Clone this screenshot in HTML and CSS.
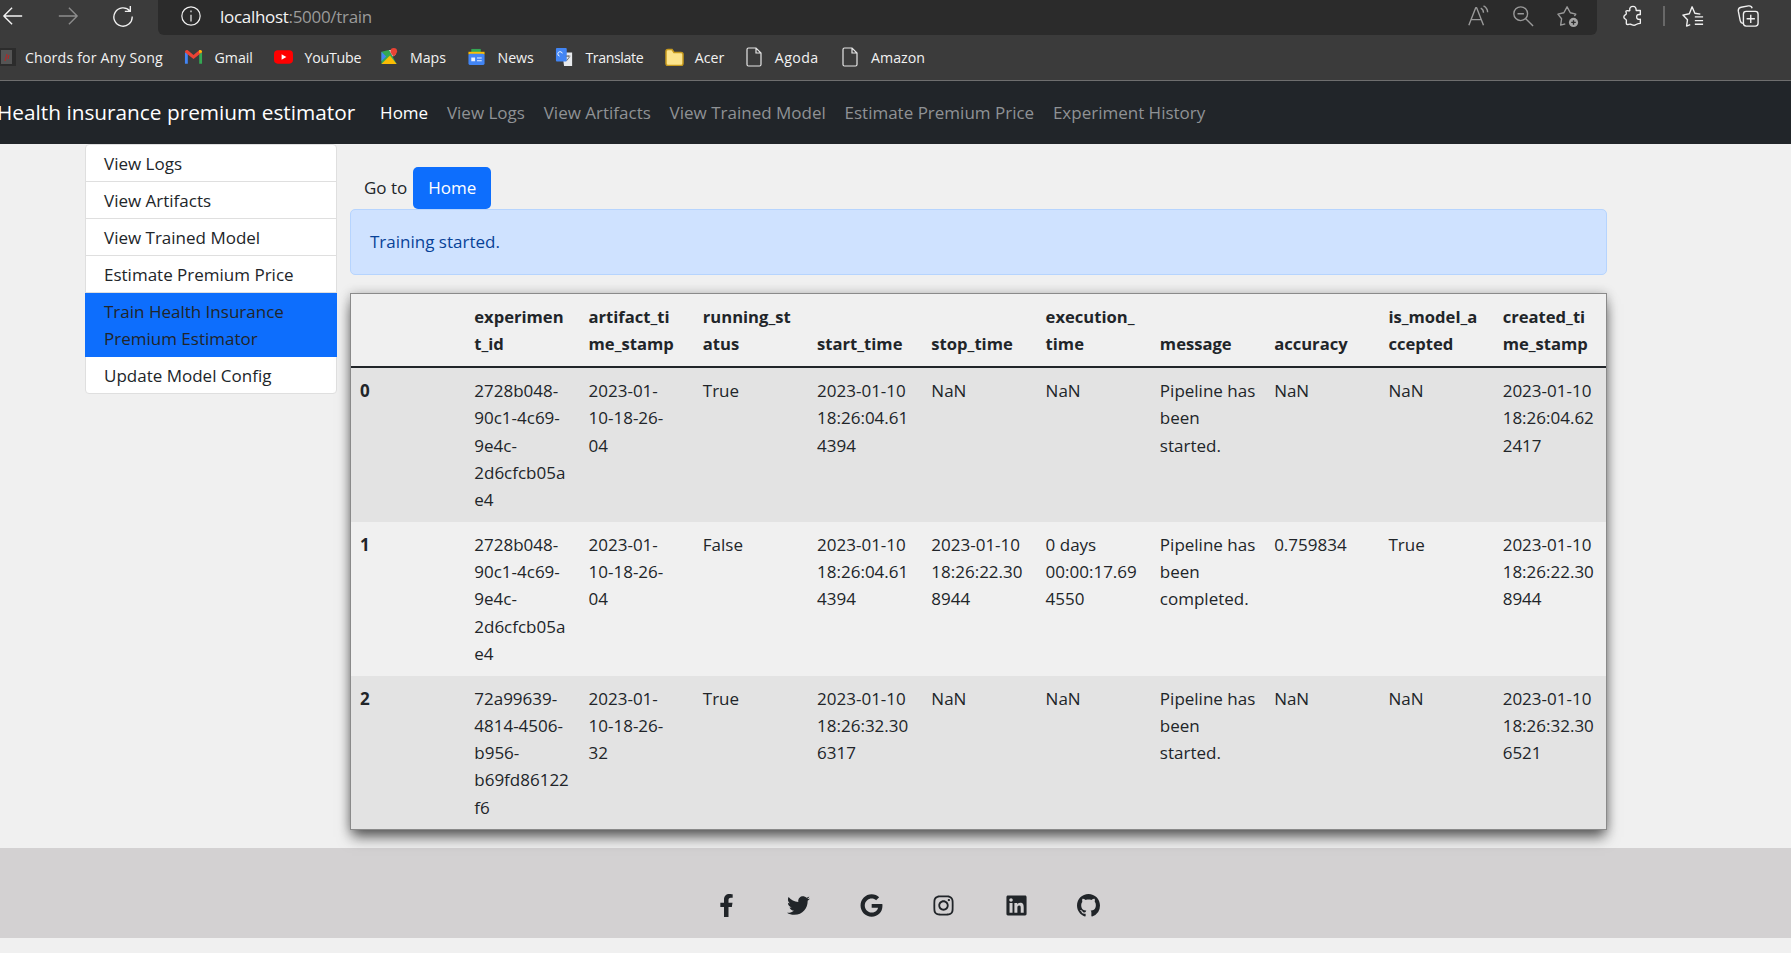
FILE: index.html
```html
<!DOCTYPE html>
<html lang="en">
<head>
<meta charset="utf-8">
<title>Health insurance premium estimator</title>
<link rel="stylesheet" href="styles.css">
</head>
<body>
<header class="browser">
  <div class="toolbar">
    <div class="nav-btns">
      <svg class="tb-icon back" viewBox="0 0 24 24"><path d="M22 12H2M11 3l-9 9 9 9"/></svg>
      <svg class="tb-icon fwd" viewBox="0 0 24 24"><path d="M2 12h20M13 3l9 9-9 9"/></svg>
      <svg class="tb-icon reload" viewBox="0 0 24 24"><path d="M19.5 6.5A10 10 0 1 0 22 12.5M20 1v6h-6"/></svg>
    </div>
    <div class="address">
      <svg class="info" viewBox="0 0 24 24"><circle cx="12" cy="12" r="10"/><path d="M12 10.5V18M12 6v2"/></svg>
      <span class="url"><span class="host">localhost</span>:5000/train</span>
      <div class="addr-tools">
        <svg class="tb-icon dim" viewBox="0 0 24 24"><path d="M2 22 9.5 3h1L18 22M5 16h10.5M15 3.5c2 1 3 3 3 5M18 1c3 1.500 4.500 4 4.500 7"/></svg>
        <svg class="tb-icon dim" viewBox="0 0 24 24"><circle cx="9.500" cy="9.500" r="7.500"/><path d="M15 15l8 8M6 9.500h7"/></svg>
        <svg class="tb-icon dim" viewBox="0 0 24 24"><path d="M9 20.500 4 22l1-7-4-5 6.500-1.500L11 2l3.500 6.500 6 1.500-1.500 2"/><circle cx="18" cy="19" r="5" class="fill-dim"/><path d="M18 16.500v5M15.500 19h5" class="dark-line"/></svg>
      </div>
    </div>
    <div class="app-tools">
      <svg class="tb-icon puzzle" viewBox="0 0 24 24"><path d="M8.500 6C8 3 9.500 1.500 12 1.500S15.500 3 15.500 6L20 6V10.500C17 10 16 11 16 13S17 16 20 15.500V20C17.500 20 16 21 15 21.500 13 23 11 21.500 9.500 21 8 20.500 6 22 5 21 4 19.500 5.500 17.500 4.500 16 3.500 15 2 15 2 13S3.500 11 4.500 10C5.500 8.500 3.500 7.500 4.500 6.500 5.500 5.500 7.500 7 8.500 6Z"/></svg>
      <span class="divider"></span>
      <svg class="tb-icon fav-list" viewBox="0 0 24 24"><path d="M9 21.500 5 23l1-7-5-5 7-1.500L11 2l3 7 6 1M14 13h9M14 17h9M14 21h9"/></svg>
      <svg class="tb-icon collections" viewBox="0 0 24 24"><path d="M7 20C5 20 4 19 3.500 17L1.500 7C1 4 2 3 4.500 2.500l8-1.500c2-.3 3.500.5 4 2.500"/><rect x="7" y="7" width="16" height="16" rx="3"/><path d="M15 10.500v9M10.500 15h9"/></svg>
    </div>
  </div>
  <nav class="bookmarks">
    <a class="bm first"><svg class="fav chord" viewBox="0 0 16 18"><rect width="16" height="18" fill="#2c2c2c"/><rect x="1" y="2" width="11" height="14" fill="#555"/><path d="M7 6l-2 7M9 7 8 11" stroke="#b22" fill="none"/></svg><span>Chords for Any Song</span></a>
    <a class="bm"><svg class="fav" viewBox="0 0 20 16"><path d="M1 15V3l3 1v11z" fill="#4285f4"/><path d="M16 15V4l3-1v12z" fill="#34a853"/><path d="M1 3c0-2 2-3 3-2l6 5 6-5c1-1 3 0 3 2l-9 7z" fill="#ea4335"/><path d="M16 4l3-1c0-2-2-3-3-2z" fill="#fbbc04"/></svg><span>Gmail</span></a>
    <a class="bm yt"><svg class="fav" viewBox="0 0 20 16"><rect y="1" width="20" height="14" rx="4" fill="#f00"/><path d="M8 5l5 3-5 3z" fill="#fff"/></svg><span>YouTube</span></a>
    <a class="bm"><svg class="fav" viewBox="0 0 19 19"><path d="M1 4l8-2 8 15H1z" fill="#34a853"/><path d="M1 17l9-9 7 9z" fill="#fbbc04"/><path d="M1 4l5 5-5 5z" fill="#4285f4"/><path d="M9 2l4 7 3-2-3-5z" fill="#f3f3f3"/><path d="M14 0a3.500 3.500 0 0 1 3.500 3.500C17.500 6 14 9 14 9s-3.500-3-3.500-5.500A3.500 3.500 0 0 1 14 0z" fill="#ea4335"/></svg><span>Maps</span></a>
    <a class="bm"><svg class="fav" viewBox="0 0 19 19"><path d="M4 1h10v6H4z" fill="#34a853"/><path d="M1 4h17v3H1z" fill="#fbbc04"/><rect x="1" y="6" width="17" height="12" rx="2" fill="#4285f4"/><path d="M4 10h4v4H4zM10 10h5v1h-5zM10 13h5v1h-5z" fill="#e8f0fe"/></svg><span>News</span></a>
    <a class="bm"><svg class="fav" viewBox="0 0 19 20"><path d="M7 5h11v15H9z" fill="#e8eaed"/><rect width="12" height="15" rx="1" fill="#4285f4"/><path d="M4 9a2.500 2.500 0 1 1 3-3" fill="none" stroke="#fff"/><path d="M11 9h5M13.500 8v2M12 14l3-4" stroke="#666" fill="none"/></svg><span class="tight">Translate</span></a>
    <a class="bm"><svg class="fav" viewBox="0 0 19 17"><path d="M1 15V3c0-1 .5-2 2-2h4l2 3h7c1.500 0 2 1 2 2v9c0 1-1 2-2 2H3c-1 0-2-1-2-2z" fill="#fce48c" stroke="#c79a1e" stroke-width="1.500"/></svg><span>Acer</span></a>
    <a class="bm bm-page"><svg class="fav page" viewBox="0 0 16 20"><path d="M2.500 1H10l5 5v11.500a1.500 1.500 0 0 1-1.500 1.500h-11A1.500 1.500 0 0 1 1 17.500v-15A1.500 1.500 0 0 1 2.500 1zM10 1v5h5"/></svg><span class="loose">Agoda</span></a>
    <a class="bm bm-page"><svg class="fav page" viewBox="0 0 16 20"><path d="M2.500 1H10l5 5v11.500a1.500 1.500 0 0 1-1.500 1.500h-11A1.500 1.500 0 0 1 1 17.500v-15A1.500 1.500 0 0 1 2.500 1zM10 1v5h5"/></svg><span>Amazon</span></a>
  </nav>
</header>

<nav class="navbar">
  <a class="brand">Health insurance premium estimator</a>
  <a class="nav-link active">Home</a>
  <a class="nav-link">View Logs</a>
  <a class="nav-link">View Artifacts</a>
  <a class="nav-link">View Trained Model</a>
  <a class="nav-link">Estimate Premium Price</a>
  <a class="nav-link">Experiment History</a>
</nav>

<main class="layout">
  <aside class="side-list">
    <a class="side-item">View Logs</a>
    <a class="side-item">View Artifacts</a>
    <a class="side-item">View Trained Model</a>
    <a class="side-item">Estimate Premium Price</a>
    <a class="side-item selected">Train Health Insurance Premium Estimator</a>
    <a class="side-item">Update Model Config</a>
  </aside>
  <section class="content">
    <div class="goto"><span class="goto-label">Go to</span><a class="btn">Home</a></div>
    <div class="alert">Training started.</div>
    <table class="data">
      <thead>
        <tr>
          <th></th>
          <th>experimen<br>t_id</th>
          <th>artifact_ti<br>me_stamp</th>
          <th>running_st<br>atus</th>
          <th>start_time</th>
          <th>stop_time</th>
          <th>execution_<br>time</th>
          <th>message</th>
          <th>accuracy</th>
          <th>is_model_a<br>ccepted</th>
          <th>created_ti<br>me_stamp</th>
        </tr>
      </thead>
      <tbody>
        <tr class="odd">
          <th>0</th>
          <td>2728b048-<br>90c1-4c69-<br>9e4c-<br>2d6cfcb05a<br>e4</td>
          <td>2023-01-<br>10-18-26-<br>04</td>
          <td>True</td>
          <td>2023-01-10<br>18:26:04.61<br>4394</td>
          <td>NaN</td>
          <td>NaN</td>
          <td>Pipeline has<br>been<br>started.</td>
          <td>NaN</td>
          <td>NaN</td>
          <td>2023-01-10<br>18:26:04.62<br>2417</td>
        </tr>
        <tr>
          <th>1</th>
          <td>2728b048-<br>90c1-4c69-<br>9e4c-<br>2d6cfcb05a<br>e4</td>
          <td>2023-01-<br>10-18-26-<br>04</td>
          <td>False</td>
          <td>2023-01-10<br>18:26:04.61<br>4394</td>
          <td>2023-01-10<br>18:26:22.30<br>8944</td>
          <td>0 days<br>00:00:17.69<br>4550</td>
          <td>Pipeline has<br>been<br>completed.</td>
          <td>0.759834</td>
          <td>True</td>
          <td>2023-01-10<br>18:26:22.30<br>8944</td>
        </tr>
        <tr class="odd">
          <th>2</th>
          <td>72a99639-<br>4814-4506-<br>b956-<br>b69fd86122<br>f6</td>
          <td>2023-01-<br>10-18-26-<br>32</td>
          <td>True</td>
          <td>2023-01-10<br>18:26:32.30<br>6317</td>
          <td>NaN</td>
          <td>NaN</td>
          <td>Pipeline has<br>been<br>started.</td>
          <td>NaN</td>
          <td>NaN</td>
          <td>2023-01-10<br>18:26:32.30<br>6521</td>
        </tr>
      </tbody>
    </table>
  </section>
</main>

<footer class="footer">
  <svg class="social fb" viewBox="0 0 320 512"><path d="M279.14 288l14.22-92.66h-88.91v-60.13c0-25.35 12.42-50.06 52.24-50.06h40.42V6.26S260.43 0 225.36 0c-73.22 0-121.08 44.38-121.08 124.72v70.62H22.89V288h81.39v224h100.17V288z"/></svg>
  <svg class="social" viewBox="0 0 512 512"><path d="M459.37 151.716c.325 4.548.325 9.097.325 13.645 0 138.72-105.583 298.558-298.558 298.558-59.452 0-114.68-17.219-161.137-47.106 8.447.974 16.568 1.299 25.34 1.299 49.055 0 94.213-16.568 130.274-44.832-46.132-.975-84.792-31.188-98.112-72.772 6.498.974 12.995 1.624 19.818 1.624 9.421 0 18.843-1.3 27.614-3.573-48.081-9.747-84.143-51.98-84.143-102.985v-1.299c13.969 7.797 30.214 12.67 47.431 13.319-28.264-18.843-46.781-51.005-46.781-87.391 0-19.492 5.197-37.36 14.294-52.954 51.655 63.675 129.3 105.258 216.365 109.807-1.624-7.797-2.599-15.918-2.599-24.04 0-57.828 46.782-104.934 104.934-104.934 30.213 0 57.502 12.67 76.67 33.137 23.715-4.548 46.456-13.32 66.599-25.34-7.798 24.366-24.366 44.833-46.132 57.827 21.117-2.273 41.584-8.122 60.426-16.243-14.292 20.791-32.161 39.308-52.628 54.253z"/></svg>
  <svg class="social" viewBox="0 0 488 512"><path d="M488 261.8C488 403.3 391.1 504 248 504 110.8 504 0 393.2 0 256S110.8 8 248 8c66.8 0 123 24.5 166.3 64.9l-67.5 64.9C258.5 52.6 94.3 116.6 94.3 256c0 86.5 69.1 156.6 153.7 156.6 98.2 0 135-70.4 140.8-106.9H248v-85.3h236.1c2.3 12.7 3.9 24.9 3.9 41.4z"/></svg>
  <svg class="social" viewBox="0 0 448 512"><path d="M224.1 141c-63.6 0-114.9 51.3-114.9 114.9s51.3 114.9 114.9 114.9S339 319.5 339 255.9 287.7 141 224.1 141zm0 189.6c-41.1 0-74.7-33.5-74.7-74.7s33.5-74.7 74.7-74.7 74.7 33.5 74.7 74.7-33.6 74.7-74.7 74.7zm146.4-194.3c0 14.9-12 26.8-26.8 26.8-14.9 0-26.8-12-26.8-26.8s12-26.8 26.8-26.8 26.8 12 26.8 26.8zm76.1 27.2c-1.7-35.9-9.9-67.7-36.2-93.9-26.2-26.2-58-34.4-93.9-36.2-37-2.1-147.9-2.1-184.9 0-35.8 1.7-67.6 9.9-93.9 36.1s-34.4 58-36.2 93.9c-2.1 37-2.1 147.9 0 184.9 1.7 35.9 9.9 67.7 36.2 93.9s58 34.4 93.9 36.2c37 2.1 147.9 2.1 184.9 0 35.9-1.7 67.7-9.9 93.9-36.2 26.2-26.2 34.4-58 36.2-93.9 2.1-37 2.1-147.8 0-184.8zM398.8 388c-7.8 19.6-22.9 34.7-42.6 42.6-29.5 11.7-99.5 9-132.1 9s-102.7 2.6-132.1-9c-19.6-7.8-34.7-22.9-42.6-42.6-11.7-29.5-9-99.5-9-132.1s-2.6-102.7 9-132.1c7.8-19.6 22.9-34.7 42.6-42.6 29.5-11.7 99.5-9 132.1-9s102.7-2.6 132.1 9c19.6 7.8 34.7 22.9 42.6 42.6 11.7 29.5 9 99.5 9 132.1s2.7 102.7-9 132.1z"/></svg>
  <svg class="social" viewBox="0 0 448 512"><path d="M416 32H31.9C14.3 32 0 46.5 0 64.3v383.4C0 465.5 14.3 480 31.9 480H416c17.6 0 32-14.5 32-32.3V64.3c0-17.8-14.4-32.3-32-32.3zM135.4 416H69V202.2h66.5V416zm-33.2-243c-21.3 0-38.5-17.3-38.5-38.5S80.9 96 102.2 96c21.2 0 38.5 17.3 38.5 38.5 0 21.3-17.2 38.5-38.5 38.5zm282.1 243h-66.4V312c0-24.8-.5-56.7-34.5-56.7-34.6 0-39.9 27-39.9 54.9V416h-66.4V202.2h63.7v29.2h.9c8.9-16.8 30.6-34.5 62.9-34.5 67.2 0 79.7 44.3 79.7 101.9V416z"/></svg>
  <svg class="social" viewBox="0 0 16 16"><path d="M8 0C3.58 0 0 3.58 0 8c0 3.54 2.29 6.53 5.47 7.59.4.07.55-.17.55-.38 0-.19-.01-.82-.01-1.49-2.01.37-2.53-.49-2.69-.94-.09-.23-.48-.94-.82-1.13-.28-.15-.68-.52-.01-.53.63-.01 1.08.58 1.23.82.72 1.21 1.87.87 2.33.66.07-.52.28-.87.51-1.07-1.78-.2-3.64-.89-3.64-3.95 0-.87.31-1.59.82-2.15-.08-.2-.36-1.02.08-2.12 0 0 .67-.21 2.2.82.64-.18 1.32-.27 2-.27.68 0 1.36.09 2 .27 1.53-1.04 2.2-.82 2.2-.82.44 1.1.16 1.92.08 2.12.51.56.82 1.27.82 2.15 0 3.07-1.87 3.75-3.65 3.95.29.25.54.73.54 1.48 0 1.07-.01 1.93-.01 2.2 0 .21.15.46.55.38A8.013 8.013 0 0016 8c0-4.42-3.58-8-8-8z"/></svg>
</footer>
</body>
</html>
```
FILE: styles.css
```css
* { box-sizing: border-box; }
html, body { margin: 0; padding: 0; }
body {
  width: 1791px;
  height: 953px;
  overflow: hidden;
  background: #f0f0f0;
  color: #212529;
  font-family: "Open Sans", "Noto Sans", sans-serif;
  font-size: 17px;
  line-height: 27px;
}

/* browser chrome */
.browser { background: #3b3b3b; }
.toolbar { display: flex; height: 35px; }
.nav-btns { display: flex; width: 158px; align-items: center; padding: 0 0 3px 2px; gap: 33px; }
.tb-icon { width: 22px; height: 22px; fill: none; stroke: #f0f0f0; stroke-width: 1.500; stroke-linejoin: round; flex: none; }
.back { stroke: #f4f4f4; }
.fwd { stroke: #8d8d8d; }
.address {
  width: 1439px;
  display: flex;
  align-items: center;
  background: #2b2b2b;
  border-radius: 0 0 6px 6px;
  padding: 0 0 3px 22px;
}
.info { width: 22px; height: 22px; fill: none; stroke: #f0f0f0; stroke-width: 1.300; flex: none; }
.url { margin-left: 18px; color: #9a9a9a; font-size: 17px; letter-spacing: -.3px; }
.host { color: #f4f4f4; }
.addr-tools { margin-left: auto; display: flex; gap: 23px; padding-right: 18px; }
.dim { stroke: #9a9a9a; }
.fill-dim { fill: #a5a5a5; stroke: none; }
.dark-line { stroke: #2b2b2b; }
.app-tools { display: flex; align-items: center; padding: 0 0 3px 25px; }
.divider { width: 2px; height: 20px; background: #686868; margin: 0 17px 0 19px; }
.fav-list { margin-right: 33px; }

.bookmarks {
  display: flex;
  align-items: center;
  gap: 21.500px;
  height: 46px;
  border-bottom: 1px solid #6e6e6e;
  color: #f2f2f2;
  font-size: 14.200px;
  padding-bottom: 1px;
}
.bm { display: flex; align-items: center; gap: 11px; }
.first { gap: 9px; letter-spacing: .15px; }
.yt { letter-spacing: -.2px; margin-right: -3px; }
.bm-page { gap: 13px; padding-right: 2px; }
.tight { letter-spacing: -.4px; }
.loose { letter-spacing: .4px; }
.fav { width: 19px; height: 18px; flex: none; }
.chord { width: 16px; }
.page { width: 16px; height: 20px; fill: none; stroke: #e6e6e6; stroke-width: 1.200; }

/* site navbar */
.navbar {
  display: flex;
  align-items: center;
  height: 63px;
  background: #212529;
  color: #8f9295;
  font-size: 17px;
}
.brand { color: #fff; font-size: 20.800px; margin-left: -3px; margin-right: 15.500px; white-space: nowrap; }
.nav-link { padding: 0 9.400px; white-space: nowrap; }
.active { color: #fff; }

/* page body */
.layout {
  display: grid;
  grid-template-columns: 252px 1257px;
  column-gap: 13px;
  align-items: start;
  padding-left: 85px;
}
.side-list {
  display: flex;
  flex-direction: column;
  background: #fff;
  border: 1px solid #dfdfdf;
  border-radius: 4px;
}
.side-item {
  padding: 5px 18px 4px;
  border-bottom: 1px solid #dfdfdf;
}
.side-item:last-child { border-bottom: 0; }
.selected { background: #0d6efd; margin: 0 -1px; padding: 5px 19px; border-bottom: 0; }

.content { padding-top: 23px; }
.goto { display: flex; align-items: center; padding-left: 14px; height: 42px; }
.goto-label { margin-right: 6px; padding-bottom: 2px; }
.btn {
  display: flex;
  align-items: center;
  justify-content: center;
  width: 78px;
  height: 42px;
  padding-bottom: 2px;
  background: #0d6efd;
  color: #fff;
  border-radius: 5px;
}
.alert {
  height: 66px;
  padding: 18px 19px;
  margin-bottom: 18px;
  background: #cfe2ff;
  border: 1px solid #b6d4fe;
  border-radius: 5px;
  color: #084298;
}
.data {
  width: 100%;
  table-layout: fixed;
  border-collapse: separate;
  border-spacing: 0;
  border-top: 1px solid #8a8a8a;
  outline: 1px solid #8a8a8a;
  outline-offset: -1px;
  box-shadow: 0 9px 13px -2px rgba(0, 0, 0, .6), 0 0 10px rgba(0, 0, 0, .22);
  background: #f0f0f0;
}
.data th, .data td {
  padding: 9px 8px 9px 10px;
  line-height: 27.150px;
  text-align: left;
  vertical-align: top;
  white-space: nowrap;
}
.data thead th {
  vertical-align: bottom;
  border-bottom: 2px solid #212529;
  font-size: 16.600px;
}
.odd th, .odd td { background: #e3e3e3; }

/* footer */
.footer {
  display: flex;
  justify-content: center;
  align-items: center;
  gap: 49.600px;
  height: 90px;
  margin-top: 18px;
  padding: 26px 0 0 24px;
  background: #d3d1d2;
}
.social { width: 23px; height: 23px; fill: #212529; }
```
